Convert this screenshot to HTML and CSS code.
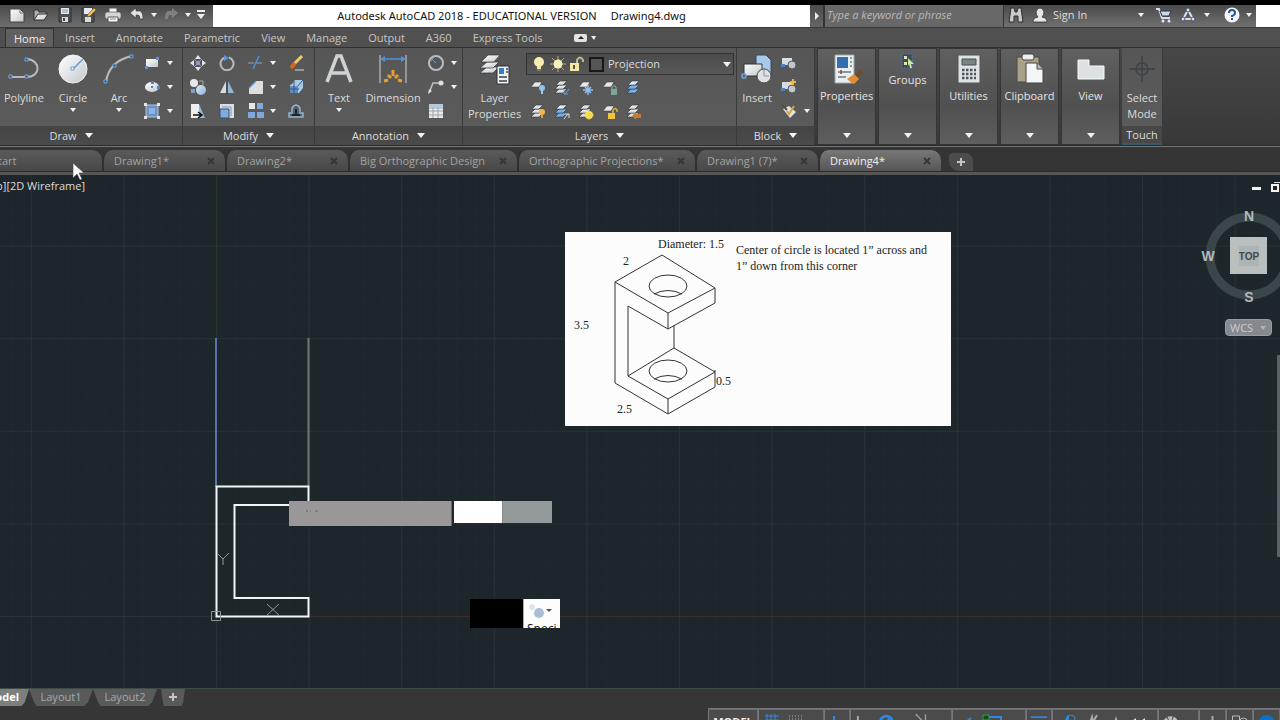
FILE: index.html
```html
<!DOCTYPE html>
<html lang="en">
<head>
<meta charset="utf-8">
<title>Autodesk AutoCAD 2018</title>
<link rel="stylesheet" href="styles.css">
</head>
<body>
<svg class="defs" aria-hidden="true">
  <defs>
    <linearGradient id="paper" x1="0" y1="0" x2="1" y2="1"><stop offset="0" stop-color="#fff"/><stop offset="1" stop-color="#c3c8cc"/></linearGradient>
    <linearGradient id="sky" x1="0" y1="0" x2="1" y2="1"><stop offset="0" stop-color="#dfeaf6"/><stop offset="1" stop-color="#8fb2dc"/></linearGradient>
    <symbol id="caret" viewBox="0 0 6 4"><path d="M0 0h6L3 4z" fill="#f2f2f2"/></symbol>
    <symbol id="caret-lg" viewBox="0 0 8 5"><path d="M0 0h8L4 5z" fill="#f2f2f2"/></symbol>
    <symbol id="close" viewBox="0 0 8 8"><path d="M1 1l6 6M7 1L1 7" stroke="#363636" stroke-width="2"/></symbol>
    <symbol id="plus" viewBox="0 0 8 8"><path d="M4 0v8M0 4h8" stroke="#c4c4c4" stroke-width="2"/></symbol>

    <symbol id="new" viewBox="0 0 16 16"><path d="M1 2h10l4 4v9H1z" fill="url(#paper)" stroke="#444"/><path d="M11 2v4h4" fill="none" stroke="#777"/></symbol>
    <symbol id="open" viewBox="0 0 16 16"><path d="M1 13V3h4l1 2h7v2" fill="#aeb1b3" stroke="#333"/><path d="M1 13l4-6h10l-4 6z" fill="#dfe1e2" stroke="#333"/></symbol>
    <symbol id="save" viewBox="0 0 16 16"><path d="M2 1h12v14H2z" fill="#4a5258" stroke="#2c3033"/><path d="M4 1h8v6H4z" fill="#e8ebed"/><path d="M5 3h6M5 5h6" stroke="#8a9298"/><path d="M5 10h6v5H5z" fill="#d8dcdf"/><path d="M6 11h2v3H6z" fill="#444"/></symbol>
    <symbol id="saveas" viewBox="0 0 16 16"><path d="M1 1h12v14H1z" fill="#4a5258" stroke="#2c3033"/><path d="M3 1h8v6H3z" fill="#e8ebed"/><path d="M4 10h6v5H4z" fill="#d8dcdf"/><path d="M6 10l1-3 6-6 2 2-6 6z" fill="#f0b95a" stroke="#7a5320" stroke-width=".6"/></symbol>
    <symbol id="print" viewBox="0 0 16 16"><path d="M4 1h8v5H4z" fill="#f4f4f4" stroke="#555"/><rect x="0" y="5" width="16" height="7" rx="2" fill="#d3d6d8" stroke="#444" stroke-width=".6"/><path d="M3 10h10v5H3z" fill="#fafafa" stroke="#555"/><path d="M5 12h6" stroke="#888"/></symbol>
    <symbol id="undo" viewBox="0 0 16 16"><path d="M1 6l6-5v3h4q3 1 3 8h-3q0-4-2-4H7v3z" fill="#e0e2e4" stroke="#333" stroke-width=".6"/></symbol>
    <symbol id="redo" viewBox="0 0 16 16"><path d="M15 6L9 1v3H5Q2 5 2 12h3q0-4 2-4h2v3z" fill="#808080"/></symbol>
    <symbol id="menu" viewBox="0 0 8 10"><path d="M0 1h8" stroke="#eee" stroke-width="2"/><path d="M0 4h8L4 9z" fill="#eee"/></symbol>

    <symbol id="polyline" viewBox="0 0 32 32"><path d="M2 24h17c14 0 14-17 0-18" fill="none" stroke="#b8bbbd" stroke-width="2"/><g fill="#3c536d" stroke="#6fa8e6"><path d="M1 22h3v3H1zM17 22h3v3h-3zM17 5h3v3h-3z"/></g></symbol>
    <symbol id="circle" viewBox="0 0 32 32"><circle cx="16" cy="16" r="14" fill="url(#paper)" stroke="#f3f3f3"/><path d="M16 16l10-10" stroke="#5a9be0" stroke-width="1.5"/><path d="M14 14h3v3h-3z" fill="#fff" stroke="#5a9be0"/></symbol>
    <symbol id="arc" viewBox="0 0 32 32"><path d="M3 29Q6 8 29 3" fill="none" stroke="#b8bbbd" stroke-width="2"/><g fill="#3c536d" stroke="#6fa8e6"><path d="M1 27h3v3H1zM10 11h3v3h-3zM27 2h3v3h-3z"/></g></symbol>
    <symbol id="rect" viewBox="0 0 16 16"><path d="M2 4h12v8H2z" fill="url(#paper)"/><path d="M1 11h3v3H1zM12 2h3v3h-3z" fill="#5b94d8"/></symbol>
    <symbol id="ellipse" viewBox="0 0 16 16"><ellipse cx="8" cy="8" rx="7" ry="5" fill="url(#paper)"/><path d="M7 2h3v3H7zM7 7h2v2H7zM13 7h3v3h-3z" fill="#4c84ca"/></symbol>
    <symbol id="hatch" viewBox="0 0 16 16"><path d="M2 2h12v12H2z" fill="#6c93c6" stroke="#b9c6d4"/><path d="M5 5h6v6H5z" fill="#8db3e2"/><g fill="#e3e6e9"><path d="M0 0h3v3H0zM13 0h3v3h-3zM0 13h3v3H0zM13 13h3v3h-3z"/></g></symbol>

    <symbol id="move" viewBox="0 0 16 16"><path d="M8 0l3 4H5zM8 16l3-4H5zM0 8l4-3v6zM16 8l-4-3v6z" fill="#dfe4e9"/><path d="M6 6h4v4H6z" fill="#8b97c9"/><path d="M4 4l2 2M12 4l-2 2M4 12l2-2M12 12l-2-2" stroke="#8b97c9"/></symbol>
    <symbol id="rotate" viewBox="0 0 16 16"><path d="M10 2.500a6.500 6.500 0 1 1-4 0" fill="none" stroke="#b6babd" stroke-width="2"/><path d="M5 0l5 3-5 3z" fill="#5b94d8"/></symbol>
    <symbol id="trim" viewBox="0 0 16 16"><path d="M0 8h16" stroke="#86a4bd" stroke-dasharray="6 2"/><path d="M11 1L5 14" stroke="#4f91dc" stroke-width="1.500"/></symbol>
    <symbol id="erase" viewBox="0 0 16 16"><path d="M14 1L6 9" stroke="#f2c870" stroke-width="3"/><path d="M7 8l-4 5" stroke="#d9641e" stroke-width="4"/><path d="M7 15h9" stroke="#999" stroke-width="2"/></symbol>
    <symbol id="copy" viewBox="0 0 16 16"><circle cx="4" cy="4" r="4" fill="#e5e7e9"/><circle cx="11" cy="11" r="5" fill="url(#sky)"/><path d="M9 2h4v4" fill="none" stroke="#aaa"/><path d="M1 10h4v4H1z" fill="#7f9fc4"/></symbol>
    <symbol id="mirror" viewBox="0 0 16 16"><path d="M7 2v12H1z" fill="#d8dadc"/><path d="M9 2v12h6z" fill="#8fb9dc"/><path d="M8 0v16" stroke="#3c4650"/></symbol>
    <symbol id="fillet" viewBox="0 0 16 16"><path d="M8 2h7v13H1V9z" fill="#dcdee0"/><path d="M1 9l7-7" stroke="#4f91dc" stroke-width="1.500"/></symbol>
    <symbol id="explode" viewBox="0 0 16 16"><path d="M4 5l3-4h8v8l-4 5H2V6z" fill="#a9c8e8"/><path d="M2 7h8v7H2z" fill="#5d8fc4"/><path d="M10 7l5-6M6 2v13M2 10h9" stroke="#3a5877"/></symbol>
    <symbol id="stretch" viewBox="0 0 16 16"><path d="M1 1h8v14H1z" fill="#eceeef"/><path d="M9 1l6 14H9z" fill="#8fb9dc"/><path d="M3 12h8M8 9l4 3-4 3" fill="none" stroke="#111" stroke-width="1.500"/></symbol>
    <symbol id="scale" viewBox="0 0 16 16"><path d="M1 1h14v14H1z" fill="#d9dee4"/><path d="M1 6h9v9H1z" fill="#7fabe2" stroke="#33506e"/><path d="M3 4h9v9" fill="none" stroke="#8b98a6"/></symbol>
    <symbol id="array" viewBox="0 0 16 16"><path d="M1 0h6v6H1z" fill="#e4e6e8"/><path d="M9 0h6v6H9zM0 9h7v6H0zM9 9h7v6H9z" fill="#7ea8de"/></symbol>
    <symbol id="offset" viewBox="0 0 16 16"><path d="M1 14v-4h3V5q4-6 8 0v5h3v4z" fill="#55606b" stroke="#93b4cf" stroke-width="1.500"/><path d="M4 12h8M8 12V6" stroke="#1c2730" stroke-width="2"/></symbol>

    <symbol id="text" viewBox="0 0 32 32"><path d="M4 29L14 3h4l10 26M9 20h14" fill="none" stroke="#cfd2d4" stroke-width="3.500"/></symbol>
    <symbol id="dim" viewBox="0 0 32 32"><path d="M3 2v28M29 2v28" stroke="#a7abad" stroke-width="1.500"/><path d="M4 6h24" stroke="#4f91dc" stroke-width="1.500"/><path d="M3 6l5-3v6zM29 6l-5-3v6z" fill="#4f91dc"/><path d="M7 28l4-1M11 22l3 3M16 17v6M21 22l-3 3M25 28l-4-1" stroke="#e7a02c" stroke-width="3"/></symbol>
    <symbol id="center" viewBox="0 0 16 16"><circle cx="8" cy="8" r="7" fill="#50565b" stroke="#b9bcbe" stroke-width="2"/><path d="M8 8L4 4M3 6l1-2 2-1" stroke="#5a9be0" fill="none"/></symbol>
    <symbol id="leader" viewBox="0 0 16 16"><path d="M1 14L5 4h7" fill="none" stroke="#bfc2c4" stroke-width="1.500"/><circle cx="13" cy="4" r="2.500" fill="#dcdee0"/><path d="M0 15l1-5 3 2z" fill="#dcdee0"/></symbol>
    <symbol id="table" viewBox="0 0 16 16"><path d="M1 1h14v14H1z" fill="#e9ebed"/><path d="M1 1h14v3H1z" fill="#b6c8dc"/><path d="M1 5h14M1 8h14M1 12h14M5 4v11M10 4v11" stroke="#9aa2a9"/></symbol>

    <symbol id="sheets" viewBox="0 0 32 32"><g fill="url(#paper)" stroke="#333" stroke-width=".7"><path d="M1 20h13l6-6H8z"/><path d="M1 15h13l6-6H8z"/><path d="M2 9h13l6-7H9z"/></g></symbol>
    <symbol id="layers" viewBox="0 0 32 32"><use href="#sheets"/><path d="M18 13h12v18H18z" fill="#eef1f3" stroke="#2c3033"/><path d="M20 15h5v6h-5z" fill="#3c7cc4"/><path d="M27 16h2M27 19h2M20 24h8M20 28h8" stroke="#39434b" stroke-width="1.500"/></symbol>
    <symbol id="bulb" viewBox="0 0 16 16"><circle cx="8" cy="6" r="5" fill="#f9eeb0"/><path d="M6 9h4v5H6z" fill="#f3e7a6"/><path d="M6 13h4v2H6z" fill="#777"/></symbol>
    <symbol id="sun" viewBox="0 0 16 16"><path d="M8 0v16M0 8h16M2 2l12 12M14 2L2 14" stroke="#a9a88c"/><circle cx="8" cy="8" r="4.500" fill="#f7f1b8"/></symbol>
    <symbol id="unlock" viewBox="0 0 16 16"><path d="M8 8V4q3-5 6 0v2" fill="none" stroke="#bfb991" stroke-width="2"/><path d="M1 7h9v8H1z" fill="#f1eaa0"/><path d="M5 9v4" stroke="#555" stroke-width="2"/></symbol>
    <symbol id="sheet" viewBox="0 0 16 16"><path d="M1 7l4-5h7L9 7z" fill="#e6e8ea" stroke="#333" stroke-width=".5"/></symbol>
    <symbol id="stack" viewBox="0 0 16 16"><g stroke="#333" stroke-width=".6" fill="#dfe2e4"><path d="M1 13l4-4h8l-4 4z"/><path d="M1 9l4-4h8L9 9z"/><path d="M2 5l4-4h7L9 5z"/></g></symbol>
    <symbol id="bluestack" viewBox="0 0 16 16"><g stroke="#253a50" stroke-width=".6" fill="#7fb0e4"><path d="M1 13l4-4h8l-4 4z"/><path d="M1 9l4-4h8L9 9z"/><path d="M2 5l4-4h7L9 5z" fill="#e6e8ea"/></g></symbol>

    <symbol id="insert" viewBox="0 0 32 32"><path d="M15 2h10l5 5v16H15z" fill="#a9c9ea" stroke="#33495f"/><path d="M3 11h18v12H3z" fill="url(#paper)" stroke="#333"/><path d="M1 21h4v4H1z" fill="#3b6ca8" stroke="#8ab6e8"/><circle cx="23" cy="23" r="7" fill="#dfe3e6" stroke="#444"/><path d="M23 17v6h5" fill="none" stroke="#8a9298"/></symbol>
    <symbol id="block" viewBox="0 0 16 16"><path d="M1 3h10v7H1z" fill="#d7dce0"/><circle cx="11" cy="10" r="4" fill="#c2c7cb" stroke="#555"/><path d="M0 9h4v3H0z" fill="#4c84ca"/></symbol>
    <symbol id="blockattr" viewBox="0 0 16 16"><path d="M2 6l6-3 7 6-6 6z" fill="#e2e3e4"/><path d="M6 8l2 3 5-8" fill="none" stroke="#dda23a" stroke-width="2"/><path d="M1 2l5 5" stroke="#574a38" stroke-width="2"/></symbol>
    <symbol id="props" viewBox="0 0 32 32"><path d="M4 2h19v28H4z" fill="#e9eef1" stroke="#9fa7ac"/><path d="M6 4h11v11H6z" fill="#336fae"/><path d="M19 5h2M19 9h2M19 13h2M7 19h13M7 24h8" stroke="#6c7880" stroke-width="1.500"/><path d="M10 17v4" stroke="#a35a63" stroke-width="2"/><path d="M31 18l-7 7" stroke="#6c4b32" stroke-width="4"/><path d="M16 26l7-5 5 5-5 5q-3-1-7-5" fill="#e08f35"/></symbol>
    <symbol id="groups" viewBox="0 0 16 16"><path d="M2 1h10v14H2z" fill="#3d4a55" stroke="#3f7bb0" stroke-dasharray="2 1"/><path d="M4 3h3v3H4zM4 9h3v3H4z" fill="#e9e4a7"/><path d="M8 5l6 6-3 0 1 4-2 0-1-4-1 2z" fill="#c9e8a0"/></symbol>
    <symbol id="calc" viewBox="0 0 32 32"><path d="M5 2h22v28H5z" fill="#dde2e4" stroke="#555"/><path d="M9 6h14v6H9z" fill="#7a8388" stroke="#4a5054"/><g stroke="#4c5358" stroke-width="2.500" stroke-dasharray="2.500 1.500"><path d="M9 17h14M9 21h14M9 25h14"/></g></symbol>
    <symbol id="clip" viewBox="0 0 32 32"><path d="M3 4h22v25H3z" fill="#a9a28a" stroke="#4d4a3f"/><rect x="8" y="1" width="12" height="6" rx="2" fill="#eceeef" stroke="#444"/><path d="M12 10h11l6 6v14H12z" fill="#f3f5f7" stroke="#444"/><path d="M23 10v6h6" fill="#bbb" stroke="#444"/></symbol>
    <symbol id="view" viewBox="0 0 32 32"><path d="M3 7h11v6h15v13H3z" fill="#dce1e3" stroke="#fafafa"/></symbol>
    <symbol id="target" viewBox="0 0 32 32"><g fill="none" stroke="#3c4246" stroke-width="1.500"><circle cx="16" cy="16" r="6"/><path d="M16 3v26M3 16h26"/></g></symbol>

    <symbol id="binoc" viewBox="0 0 16 16"><path d="M3 1h3l1 4h2l1-4h3l2 14h-5V9H6v6H1z" fill="#c9ccce" stroke="#2d2d2d"/></symbol>
    <symbol id="user" viewBox="0 0 16 16"><path d="M1 15q0-4 5-5-2-2-2-5 1-4 4-4t4 4q0 3-2 5 5 1 5 5z" fill="#e6e7e8" stroke="#333" stroke-width=".8"/></symbol>
    <symbol id="cart" viewBox="0 0 16 16"><path d="M0 2h3l3 9h8" fill="none" stroke="#d8dce4" stroke-width="2"/><path d="M4 4h11l-2 5H6z" fill="#cfd7e3" stroke="#23324d"/><circle cx="7" cy="14" r="1.500" fill="#e4e8ee"/><circle cx="13" cy="14" r="1.500" fill="#e4e8ee"/></symbol>
    <symbol id="a360" viewBox="0 0 16 16"><path d="M8 3l5 9H3z" fill="none" stroke="#dbe2ec" stroke-width="2"/><g fill="#dbe2ec" stroke="#3a4f78"><circle cx="8" cy="3" r="2"/><circle cx="3" cy="12" r="2"/><circle cx="13" cy="12" r="2"/></g></symbol>
    <symbol id="help" viewBox="0 0 16 16"><circle cx="8" cy="8" r="7.500" fill="#f2f5f8"/><path d="M5 6q0-3 3-3t3 3q0 2-3 3v1M8 11v2" fill="none" stroke="#2a5696" stroke-width="2"/></symbol>
  </defs>
</svg>

<header class="titlebar">
  <div class="quick">
    <button class="ic" aria-label="New"><svg><use href="#new"/></svg></button>
    <button class="ic" aria-label="Open"><svg><use href="#open"/></svg></button>
    <button class="ic" aria-label="Save"><svg><use href="#save"/></svg></button>
    <button class="ic" aria-label="Save as"><svg><use href="#saveas"/></svg></button>
    <button class="ic" aria-label="Plot"><svg><use href="#print"/></svg></button>
    <button class="ic" aria-label="Undo"><svg><use href="#undo"/></svg></button>
    <button class="dd" aria-label="Undo list"><svg><use href="#caret"/></svg></button>
    <button class="ic" aria-label="Redo"><svg><use href="#redo"/></svg></button>
    <button class="dd" aria-label="Redo list"><svg><use href="#caret"/></svg></button>
    <button class="dd dd-menu" aria-label="Customize toolbar"><svg><use href="#menu"/></svg></button>
  </div>
  <h1 class="title"><span>Autodesk AutoCAD 2018 - EDUCATIONAL VERSION</span><span>Drawing4.dwg</span></h1>
  <button class="expand" aria-label="Collapse search"><svg viewBox="0 0 4 8"><path d="M0 0l4 4-4 4z" fill="#eee"/></svg></button>
  <input class="search" type="search" aria-label="Search" placeholder="Type a keyword or phrase">
  <div class="account">
    <button class="ic" aria-label="Search help"><svg><use href="#binoc"/></svg></button>
    <button class="signin"><svg><use href="#user"/></svg><span>Sign In</span><svg class="c"><use href="#caret"/></svg></button>
    <button class="ic" aria-label="App store"><svg><use href="#cart"/></svg></button>
    <button class="ic" aria-label="Autodesk 360"><svg><use href="#a360"/></svg></button>
    <button class="dd" aria-label="360 menu"><svg><use href="#caret"/></svg></button>
    <button class="ic help" aria-label="Help"><svg><use href="#help"/></svg></button>
    <button class="dd" aria-label="Help menu"><svg><use href="#caret"/></svg></button>
  </div>
  <div class="title-end"></div>
</header>

<nav class="menu">
  <button class="on">Home</button><button>Insert</button><button>Annotate</button><button>Parametric</button><button>View</button><button>Manage</button><button>Output</button><button>A360</button><button>Express Tools</button>
  <button class="minimize" aria-label="Minimize ribbon"><svg viewBox="0 0 22 8"><rect width="13" height="8" rx="2" fill="#e0e2e4"/><path d="M4 5l3-3 3 3z" fill="#222"/><path d="M17 2h5l-2 4z" fill="#eee"/></svg></button>
</nav>

<section class="ribbon" aria-label="Ribbon">
  <div class="panel draw">
    <div class="body">
      <button class="big"><svg><use href="#polyline"/></svg>Polyline</button>
      <button class="big mid"><svg><use href="#circle"/></svg>Circle<svg class="c"><use href="#caret"/></svg></button>
      <button class="big"><svg><use href="#arc"/></svg>Arc<svg class="c"><use href="#caret"/></svg></button>
      <div class="tools t-draw">
        <button aria-label="Rectangle"><svg><use href="#rect"/></svg></button><svg class="c"><use href="#caret"/></svg>
        <button aria-label="Ellipse"><svg><use href="#ellipse"/></svg></button><svg class="c"><use href="#caret"/></svg>
        <button aria-label="Hatch"><svg><use href="#hatch"/></svg></button><svg class="c"><use href="#caret"/></svg>
      </div>
    </div>
    <button class="foot">Draw<svg><use href="#caret-lg"/></svg></button>
  </div>
  <div class="panel modify">
    <div class="body">
      <div class="tools t-modify">
        <button aria-label="Move"><svg><use href="#move"/></svg></button><button aria-label="Rotate"><svg><use href="#rotate"/></svg></button><button aria-label="Trim"><svg><use href="#trim"/></svg></button><svg class="c"><use href="#caret"/></svg><button aria-label="Erase"><svg><use href="#erase"/></svg></button>
        <button aria-label="Copy"><svg><use href="#copy"/></svg></button><button aria-label="Mirror"><svg><use href="#mirror"/></svg></button><button aria-label="Fillet"><svg><use href="#fillet"/></svg></button><svg class="c"><use href="#caret"/></svg><button aria-label="Explode"><svg><use href="#explode"/></svg></button>
        <button aria-label="Stretch"><svg><use href="#stretch"/></svg></button><button aria-label="Scale"><svg><use href="#scale"/></svg></button><button aria-label="Array"><svg><use href="#array"/></svg></button><svg class="c"><use href="#caret"/></svg><button aria-label="Offset"><svg><use href="#offset"/></svg></button>
      </div>
    </div>
    <button class="foot">Modify<svg><use href="#caret-lg"/></svg></button>
  </div>
  <div class="panel annotation">
    <div class="body">
      <button class="big"><svg><use href="#text"/></svg>Text<svg class="c"><use href="#caret"/></svg></button>
      <button class="big wide"><svg><use href="#dim"/></svg>Dimension</button>
      <div class="tools t-annot">
        <button aria-label="Center mark"><svg><use href="#center"/></svg></button><svg class="c"><use href="#caret"/></svg>
        <button aria-label="Leader"><svg><use href="#leader"/></svg></button><svg class="c"><use href="#caret"/></svg>
        <button aria-label="Table"><svg><use href="#table"/></svg></button>
      </div>
    </div>
    <button class="foot">Annotation<svg><use href="#caret-lg"/></svg></button>
  </div>
  <div class="panel layers">
    <div class="body">
      <button class="big wide"><svg><use href="#layers"/></svg>Layer<br>Properties</button>
      <div class="layer-side">
        <div class="combo">
          <svg><use href="#bulb"/></svg><svg><use href="#sun"/></svg><svg><use href="#unlock"/></svg><i class="swatch"></i>
          <select aria-label="Layer"><option>Projection</option></select>
          <svg class="c"><use href="#caret-lg"/></svg>
        </div>
        <div class="tools t-layers">
          <button aria-label="Layer off"><svg viewBox="0 0 16 16"><use href="#sheet"/><circle cx="12" cy="8" r="3" fill="#8fc3f0"/><path d="M12 10v4" stroke="#a9c8e4" stroke-width="2"/></svg></button>
          <button aria-label="Isolate"><svg viewBox="0 0 16 16"><use href="#stack"/><path d="M15 9l-4 5M10 10v4h4" fill="none" stroke="#6fa1d6"/></svg></button>
          <button aria-label="Freeze"><svg viewBox="0 0 16 16"><use href="#sheet"/><path d="M10 5v10M5 10h10M7 7l6 6M13 7l-6 6" stroke="#8fc0f4" stroke-width="1.500"/></svg></button>
          <button aria-label="Lock"><svg viewBox="0 0 16 16"><use href="#sheet"/><path d="M9 9h6v6H9z" fill="#7ea79b"/><path d="M10 9V7q2-3 4 0v2" fill="none" stroke="#8fae9f"/></svg></button>
          <button aria-label="Make current"><svg><use href="#bluestack"/></svg></button>
          <button aria-label="Turn all on"><svg viewBox="0 0 16 16"><use href="#stack"/><circle cx="12" cy="8" r="3" fill="#f6b545"/><path d="M12 10v4" stroke="#d8a04a" stroke-width="2"/></svg></button>
          <button aria-label="Unisolate"><svg viewBox="0 0 16 16"><use href="#bluestack"/><path d="M10 15l4-5M11 10h4v4" fill="none" stroke="#ddd"/></svg></button>
          <button aria-label="Thaw all"><svg viewBox="0 0 16 16"><use href="#stack"/><circle cx="11" cy="11" r="4" fill="#f7e14e"/><path d="M11 5v11M6 11h10" stroke="#f0cf4a"/></svg></button>
          <button aria-label="Unlock"><svg viewBox="0 0 16 16"><use href="#sheet"/><path d="M6 9h7v6H6z" fill="#f0c43a"/><path d="M11 9V6q2-3 4 0v2" fill="none" stroke="#e0b22e" stroke-width="1.500"/></svg></button>
          <button aria-label="Layer previous"><svg viewBox="0 0 16 16"><use href="#stack"/><path d="M6 12l4-4v2h5v4h-5v2z" fill="#c97b36"/></svg></button>
        </div>
      </div>
    </div>
    <button class="foot">Layers<svg><use href="#caret-lg"/></svg></button>
  </div>
  <div class="panel block">
    <div class="body">
      <button class="big"><svg><use href="#insert"/></svg>Insert</button>
      <div class="tools t-block">
        <button aria-label="Create block"><svg><use href="#block"/></svg></button><i></i>
        <button aria-label="Edit block"><svg viewBox="0 0 16 16"><use href="#block"/><path d="M12 0v6M9 3h6" stroke="#f0b53a" stroke-width="2"/></svg></button><i></i>
        <button aria-label="Edit attributes"><svg><use href="#blockattr"/></svg></button><svg class="c"><use href="#caret"/></svg>
      </div>
    </div>
    <button class="foot">Block<svg><use href="#caret-lg"/></svg></button>
  </div>
  <button class="slim"><svg><use href="#props"/></svg>Properties<svg class="c"><use href="#caret-lg"/></svg></button>
  <button class="slim small"><svg><use href="#groups"/></svg>Groups<svg class="c"><use href="#caret-lg"/></svg></button>
  <button class="slim"><svg><use href="#calc"/></svg>Utilities<svg class="c"><use href="#caret-lg"/></svg></button>
  <button class="slim"><svg><use href="#clip"/></svg>Clipboard<svg class="c"><use href="#caret-lg"/></svg></button>
  <button class="slim"><svg><use href="#view"/></svg>View<svg class="c"><use href="#caret-lg"/></svg></button>
  <div class="panel touch">
    <div class="body"><button class="big"><svg><use href="#target"/></svg>Select<br>Mode</button></div>
    <button class="foot">Touch</button>
  </div>
</section>

<nav class="files">
  <button class="file start">Start</button>
  <button class="file">Drawing1*<svg><use href="#close"/></svg></button>
  <button class="file">Drawing2*<svg><use href="#close"/></svg></button>
  <button class="file long">Big Orthographic Design<svg><use href="#close"/></svg></button>
  <button class="file longer">Orthographic Projections*<svg><use href="#close"/></svg></button>
  <button class="file">Drawing1 (7)*<svg><use href="#close"/></svg></button>
  <button class="file on">Drawing4*<svg><use href="#close"/></svg></button>
  <button class="add" aria-label="New drawing"><svg><use href="#plus"/></svg></button>
  <svg class="pointer" viewBox="0 0 12 19"><path d="M1 1v15l4-4 3 6 2-1-3-6h5z" fill="#fff" stroke="#444" stroke-width=".6"/></svg>
</nav>

<main class="canvas">
  <svg class="model" aria-label="Model space">
    <defs>
      <pattern id="grid" x="216" y="441" width="92.6" height="92.6" patternUnits="userSpaceOnUse">
        <path d="M19 0v93M37.500 0v93M56 0v93M74.500 0v93M0 19h93M0 37.500h93M0 56h93M0 74.500h93" stroke="#1f282d"/>
        <path d="M.5 0v93M0 .5h93" stroke="#283136"/>
      </pattern>
    </defs>
    <rect width="100%" height="100%" fill="url(#grid)"/>
    <g transform="translate(216 441)" fill="none">
      <path d="M0 .5h1100" stroke="#3b2a2e"/>
      <path d="M.5-441v164" stroke="#29372f"/>
      <path d="M0-278v149" stroke="#5a74ab" stroke-width="2"/>
      <path d="M92.500-278v149" stroke="#6f777b" stroke-width="2"/>
      <path d="M.5-129.500h92v18.500h-74v93h74v18.500h-92z" stroke="#f4f5f6" stroke-width="2"/>
      <path d="M-4.500-4.500h9v9h-9zM1-63l6 6 6-6M7-57v6M51-12l12 11M63-12l-12 11" stroke="#8f989c"/>
    </g>
  </svg>
  <span class="viewlabel">[–][Top][2D Wireframe]</span>

  <figure class="sheet">
    <svg viewBox="0 0 386 194" fill="none" stroke="#333">
      <path d="M97 23L50 50v101l53 31 47-27v-17M97 23l53 33v15l-47 26L63 74v70l40 23v15M103 97V81l47-25M50 50l53 31M103 167l47-27-41-24V93M63 144l46-28"/>
      <ellipse cx="103" cy="54" rx="19" ry="11"/><path d="M89 62q14-7 28 0"/>
      <ellipse cx="103" cy="139" rx="19" ry="11"/><path d="M89 147q14-7 28 0"/>
    </svg>
    <span class="n-dia">Diameter: 1.5</span><span class="n-2">2</span><span class="n-35">3.5</span><span class="n-05">0.5</span><span class="n-25">2.5</span>
    <p>Center of circle is located 1” across and<br>1” down from this corner</p>
  </figure>

  <div class="dyn"><div class="prompt"><svg viewBox="0 0 14 2"><path d="M0 1h2M4 1h1M9 1h3" stroke="#666"/></svg></div><input aria-label="Distance"><div class="second"></div></div>
  <div class="cmd"><div class="grip"></div><div class="cmdbox"><svg viewBox="0 0 36 22"><circle cx="8" cy="8" r="3" fill="#dbe5ea"/><circle cx="15" cy="14" r="5" fill="#a9bdd6"/><path d="M22 10h6l-3 3z" fill="#555"/></svg><span>Speci</span></div></div>

  <div class="winbtns"><button aria-label="Minimize"><svg viewBox="0 0 10 10"><path d="M0 6.500h9" stroke="#f2f2f2" stroke-width="3"/></svg></button><button aria-label="Restore"><svg viewBox="0 0 10 10"><path d="M1 3h6v6H1z" fill="#222" stroke="#f2f2f2" stroke-width="2"/><path d="M3 .5h7V8" fill="none" stroke="#ddd"/></svg></button></div>
  <svg class="cube" viewBox="0 0 100 104">
    <circle cx="50" cy="52" r="39" fill="none" stroke="#3b464a" stroke-width="9"/>
    <path d="M31 33h37v37H31z" fill="#b9bfbf"/><path d="M40 42h20v20H40z" fill="#adb4b3"/>
    <g text-anchor="middle" fill="#b4babc"><text x="50" y="17">N</text><text x="50" y="98">S</text><text x="9" y="57">W</text><text class="top" x="50" y="56">TOP</text></g>
  </svg>
  <button class="wcs">WCS<svg><use href="#caret"/></svg></button>
  <div class="navbar"></div>
</main>

<footer class="bottom">
  <nav class="layouts"><button class="on">Model</button><button>Layout1</button><button>Layout2</button><button class="new" aria-label="New layout"><svg><use href="#plus"/></svg></button></nav>
  <div class="status">
    <button class="s-model">MODEL</button>
    <button class="s-grid" aria-label="Grid"><svg viewBox="0 0 64 16"><path d="M6 3h14M6 7h14M6 11h14M8 1v14M12 1v14M16 1v14" stroke="#2f87e0"/><path d="M30 3h14M30 6h14M30 9h14" stroke="#aaa" stroke-dasharray="1 2"/><path d="M53 7h7l-3 4z" fill="#eee"/></svg></button>
    <button class="s-dyn" aria-label="Dynamic input"><svg viewBox="0 0 24 16"><path d="M9 3v12M4 8h10" stroke="#2f87e0" stroke-width="2"/></svg></button>
    <button class="s-snap" aria-label="Snap modes"><svg viewBox="0 0 102 16"><path d="M7 3v10h8" fill="none" stroke="#aaa" stroke-width="2"/><circle cx="36" cy="9" r="6" fill="none" stroke="#2f87e0" stroke-width="3"/><path d="M30 14l10-9" stroke="#2f87e0" stroke-width="2"/><path d="M52 7h7l-3 4zM91 7h7l-3 4z" fill="#eee"/><path d="M66 1l12 12M76 1v8" stroke="#999" stroke-width="1.500"/></svg></button>
    <button class="s-osnap" aria-label="Object snap"><svg viewBox="0 0 72 16"><path d="M8 13l10-8" stroke="#2f87e0" stroke-width="2"/><path d="M34 4h14v10H34z" fill="none" stroke="#2f87e0" stroke-width="2"/><path d="M30 2h6v5h-6z" fill="#124d20" stroke="#2ea044"/><path d="M60 7h7l-3 4z" fill="#eee"/></svg></button>
    <button class="s-lwt" aria-label="Lineweight"><svg viewBox="0 0 25 16"><path d="M4 4h17M4 8h17M4 12h17" stroke="#2f87e0" stroke-width="2"/></svg></button>
    <button class="s-ann" aria-label="Annotation scale"><svg viewBox="0 0 104 16"><path d="M9 15l6-12v12" fill="none" stroke="#2f87e0" stroke-width="2"/><circle cx="18" cy="6" r="4" fill="none" stroke="#2f87e0"/><path d="M35 15l4-11 2 11M44 2l-4 7h5" fill="none" stroke="#aaa" stroke-width="2"/><path d="M59 15l4-12 4 12z" fill="#aaa"/><path d="M79 9l3-2v8M88 9l3-2v8" fill="none" stroke="#eee" stroke-width="2"/><path d="M96 7h7l-3 4z" fill="#eee"/></svg></button>
    <button class="s-gear" aria-label="Workspace"><svg viewBox="0 0 40 16"><circle cx="12" cy="11" r="6" fill="none" stroke="#bbb" stroke-width="4" stroke-dasharray="4 1"/><path d="M28 7h7l-3 4z" fill="#eee"/></svg></button>
    <button class="s-plus" aria-label="Annotation monitor"><svg viewBox="0 0 24 16"><path d="M12 3v12M6 9h12" stroke="#aaa" stroke-width="2"/></svg></button>
    <button class="s-iso" aria-label="Isolate objects"><svg viewBox="0 0 24 16"><path d="M5 3h7v8H5z" fill="none" stroke="#bbb"/><circle cx="16" cy="9" r="4" fill="none" stroke="#bbb"/></svg></button>
    <button class="s-perf" aria-label="Hardware acceleration"><svg viewBox="0 0 24 16"><circle cx="12" cy="10" r="8" fill="#0d6fc6"/></svg></button>
    <button class="s-clean" aria-label="Clean screen"><svg viewBox="0 0 12 16"><path d="M5 5h9v9H5z" fill="none" stroke="#bbb"/></svg></button>
  </div>
</footer>
</body>
</html>
```
FILE: styles.css
```css
* { box-sizing: border-box; }
html, body { height: 100%; }
body {
  margin: 0; padding-top: 5px; background: #000; color: #dcdcdc;
  display: flex; flex-direction: column; overflow: hidden;
  font: 11px/16px "Open Sans", "Noto Sans", sans-serif;
}
button, input, select { font: inherit; color: inherit; background: none; border: 0; margin: 0; padding: 0; white-space: nowrap; }
svg { display: block; flex: none; width: 16px; height: 16px; }
svg.c { width: 6px; height: 4px; }
.defs { position: absolute; width: 0; height: 0; }

.titlebar { flex: 0 0 22px; display: flex; background: #555; }
.quick { flex: 0 0 213px; display: flex; align-items: center; gap: 8px; padding: 0 4px 2px 9px; background: linear-gradient(#4a4a4a, #6e6e6e); }
.dd svg { width: 6px; height: 4px; }
.dd-menu svg { width: 8px; height: 10px; }
.quick .dd { flex: 0 0 6px; margin: 0 -2px; }
.quick .dd-menu { flex-basis: 8px; margin: 0; }
.title { flex: 1 1 0; margin: 0; display: flex; justify-content: center; gap: 14px; background: #fff; color: #111; font-family: "Noto Sans", sans-serif; font-size: 11px; font-weight: 400; line-height: 21px; white-space: nowrap; }
.expand { flex: 0 0 15px; display: flex; align-items: center; justify-content: center; background: linear-gradient(#4c4c4c, #666); border-right: 2px solid #333; }
.expand svg { width: 4px; height: 8px; }
.search { flex: 0 0 179px; width: 179px; padding: 0 2px 2px; background: #686868; border-right: 1px solid #333; font-style: italic; }
.search::placeholder { color: #b9b9b9; opacity: 1; }
.account { flex: 0 0 252px; display: flex; align-items: center; gap: 8px; padding: 0 4px 2px; background: linear-gradient(#4a4a4a, #707070); }
.signin { flex: 1; display: flex; align-items: center; gap: 5px; }
.signin .c { margin-left: auto; margin-right: 4px; }
.account .dd { flex: 0 0 6px; }
.account .dd:last-child { margin-left: -2px; }
.help { margin-left: 6px; }
.title-end { flex: 0 0 24px; background: #fff; }

.menu { flex: 0 0 20px; display: flex; gap: 1px; background: #505050; border-top: 1px solid #383838; border-bottom: 1px solid #303030; padding-left: 5px; color: #c6c6c6; }
.menu button { padding: 0 10px; line-height: 19px; }
.menu .on { padding: 0 8px; background: #606060; border: 1px solid #333; border-bottom: 0; color: #eee; line-height: 17px; }
.menu .minimize { padding: 0 20px; }
.menu .minimize svg { width: 22px; height: 8px; }

.ribbon { flex: 0 0 98px; display: flex; background: linear-gradient(#474747, #383838); border-bottom: 1px solid #2a2a2a; }
.panel { display: flex; flex-direction: column; border-right: 1px solid #3a3a3a; background: linear-gradient(#565656, #5c5c5c); flex: none; }
.body { flex: 1; display: flex; }
.foot { flex: 0 0 19px; display: flex; align-items: center; justify-content: center; gap: 8px; background: linear-gradient(#444, #4b4b4b); }
.foot svg { width: 8px; height: 5px; }
.draw { width: 183px; }
.draw .foot { padding-right: 40px; }
.modify { width: 132px; }
.annotation { width: 148px; }
.layers { width: 274px; }
.block { width: 78px; }
.touch { width: 41px; margin-left: 2px; }
.touch .foot { border-bottom: 2px solid #355b6d; background: #484848; }
.big { flex: 0 0 48px; display: flex; flex-direction: column; align-items: center; padding-top: 5px; text-align: center; }
.big > svg:first-child { width: 32px; height: 32px; margin-bottom: 5px; }
.big .c { margin-top: 2px; }
.big.mid { flex-basis: 50px; }
.big.wide { flex-basis: 60px; }
.layers .big.wide { flex-basis: 63px; }
.block .big, .touch .big { flex-basis: 40px; }
.tools { display: grid; grid-auto-rows: 24px; align-content: start; justify-items: center; align-items: center; padding-top: 3px; }
.t-draw { grid-template-columns: 24px 12px; }
.draw .big:nth-child(3) { flex-basis: 42px; }
.t-modify { grid-template-columns: 29px 29px 29px 6px 40px; }
.t-annot { grid-template-columns: 26px 10px; }
.t-layers { grid-template-columns: repeat(5, 24px); padding-top: 1px; }
.t-block { grid-template-columns: 24px 12px; }
.layer-side { flex: 1; padding: 5px 2px 0 0; }
.combo { display: flex; align-items: center; gap: 3px; height: 22px; padding: 0 2px 0 4px; border: 1px solid #333; background: linear-gradient(#4b4b4b, #585858); }
.swatch { flex: 0 0 15px; height: 15px; margin: 0 1px; border: 2px solid #181818; background: #555; }
.combo select { flex: 1; appearance: none; outline: 0; }
.combo .c { width: 8px; height: 5px; }
.slim { flex: 0 0 59px; display: flex; flex-direction: column; align-items: center; padding: 4px 0 6px; margin-left: 2px; border: 1px solid #363636; background: linear-gradient(#606060, #505050 60%, #5e5e5e); color: #e4e4e4; }
.slim > svg:first-child { width: 32px; height: 32px; margin-bottom: 3px; }
.slim.small > svg:first-child { width: 16px; height: 16px; }
.slim .c { width: 8px; height: 5px; margin-top: auto; }

.files { flex: 0 0 29px; display: flex; align-items: stretch; padding: 3px 0 4px; background: #353535; border-top: 1px solid #777; position: relative; z-index: 1; box-shadow: inset 0 -3px #565656, inset 0 -4px #2c2c2c; }
.file { flex: 0 0 123px; display: flex; align-items: center; justify-content: space-between; padding: 0 10px; color: #a3a3a3; background: linear-gradient(#5a5a5a, #484848); border-radius: 10px 10px 0 0; border-left: 2px solid #303030; }
.file svg { width: 8px; height: 8px; }
.file.start { flex-basis: 122px; margin-left: -20px; }
.file.long { flex-basis: 169px; }
.file.longer { flex-basis: 178px; }
.file.on { color: #f0f0f0; background: linear-gradient(#787878, #565656); }
.add { flex: 0 0 24px; margin: 3px 8px 0; display: flex; align-items: center; justify-content: center; background: #4c4c4c; border-radius: 4px 8px 0 10px; }
.add svg { width: 8px; height: 8px; }
.pointer { position: absolute; left: 72px; top: 15px; width: 12px; height: 19px; }

.canvas { flex: 1; position: relative; background: #1d262b; overflow: hidden; }
.model { position: absolute; inset: 0; width: 100%; height: 100%; }
.viewlabel { position: absolute; right: calc(100% - 85px); top: 3px; white-space: nowrap; }
.sheet { position: absolute; left: 565px; top: 57px; width: 386px; height: 194px; margin: 0; background: #fcfcfc; color: #222; font: 12px/16px "Liberation Serif", serif; }
.sheet svg { width: 100%; height: 100%; }
.sheet span, .sheet p { position: absolute; margin: 0; white-space: nowrap; }
.n-dia { left: 93px; top: 4px; }
.n-2 { left: 58px; top: 21px; }
.n-35 { left: 9px; top: 85px; }
.n-05 { left: 151px; top: 141px; }
.n-25 { left: 52px; top: 169px; }
.sheet p { left: 171px; top: 10px; }
.dyn { position: absolute; left: 289px; top: 326px; display: flex; align-items: flex-start; }
.prompt { width: 163px; height: 25px; margin-right: 2px; padding: 9px 17px; background: #999798; border-right: 1px solid #666; }
.prompt svg { width: 14px; height: 2px; }
.dyn input { width: 49px; height: 22px; background: #fff; border-right: 1px solid #888; border-radius: 0; }
.second { width: 49px; height: 22px; background: #949999; }
.cmd { position: absolute; left: 470px; top: 424px; display: flex; height: 29px; }
.grip { width: 53px; background: #000; }
.cmdbox { width: 37px; background: #fdfdfd; color: #111; overflow: hidden; border-left: 1px solid #aaa; }
.cmdbox svg { width: 36px; height: 22px; }
.cmdbox span { display: block; padding-left: 3px; font-size: 12px; }
.winbtns { position: absolute; right: -1px; top: 7px; display: flex; gap: 9px; }
.winbtns svg { width: 10px; height: 10px; }
.cube { position: absolute; right: -19px; top: 29px; width: 100px; height: 104px; font: bold 14px "Liberation Sans", sans-serif; }
.cube .top { font-size: 10px; fill: #41494c; }
.wcs { position: absolute; right: 8px; top: 144px; width: 47px; height: 17px; display: flex; align-items: center; justify-content: space-between; padding: 0 5px 0 4px; border-radius: 4px; background: #858a90; border: 1px solid #999da1; color: #c9ccce; }
.wcs svg { width: 6px; height: 4px; opacity: .4; }
.navbar { position: absolute; right: 0; top: 180px; width: 3px; height: 202px; background: #5b6265; }

.bottom { flex: 0 0 32px; display: flex; justify-content: space-between; background: #363636; overflow: hidden; border-top: 1px solid #3d4a48; }
.layouts { display: flex; height: 17px; margin-left: -25px; color: #a8a8a8; }
.layouts button { width: 64px; padding-bottom: 2px; line-height: 15px; background: #585b5a; clip-path: polygon(0 0, 100% 0, 92% 80%, 86% 100%, 12% 100%, 8% 80%); }
.layouts .on { width: 54px; background: #7b807e; color: #fff; font-weight: 700; }
.layouts .new { width: 24px; margin-left: 4px; display: flex; align-items: center; justify-content: center; }
.layouts .new svg { width: 8px; height: 8px; }
.status { flex: 0 0 572px; margin-top: 19px; height: 26px; display: flex; overflow: hidden; border-top: 1px solid #777; color: #f0f0f0; font-size: 11px; font-weight: 700; }
.status button { flex: none; display: flex; align-items: flex-start; background: #4b4b4b; border: 1px solid #6d6d6d; border-left-color: #777; overflow: hidden; padding: 3px 0 0; }
.status svg { width: 100%; height: 16px; }
.status .s-model { width: 50px; justify-content: center; padding-top: 4px; }
.status .s-grid { width: 66px; }
.status .s-dyn, .status .s-lwt { width: 26px; }
.status .s-snap { width: 102px; }
.status .s-osnap { width: 74px; }
.status .s-ann { width: 106px; }
.status .s-gear { width: 41px; }
.status .s-plus, .status .s-iso, .status .s-perf { width: 27px; }
.status .s-clean { width: 14px; }
```
